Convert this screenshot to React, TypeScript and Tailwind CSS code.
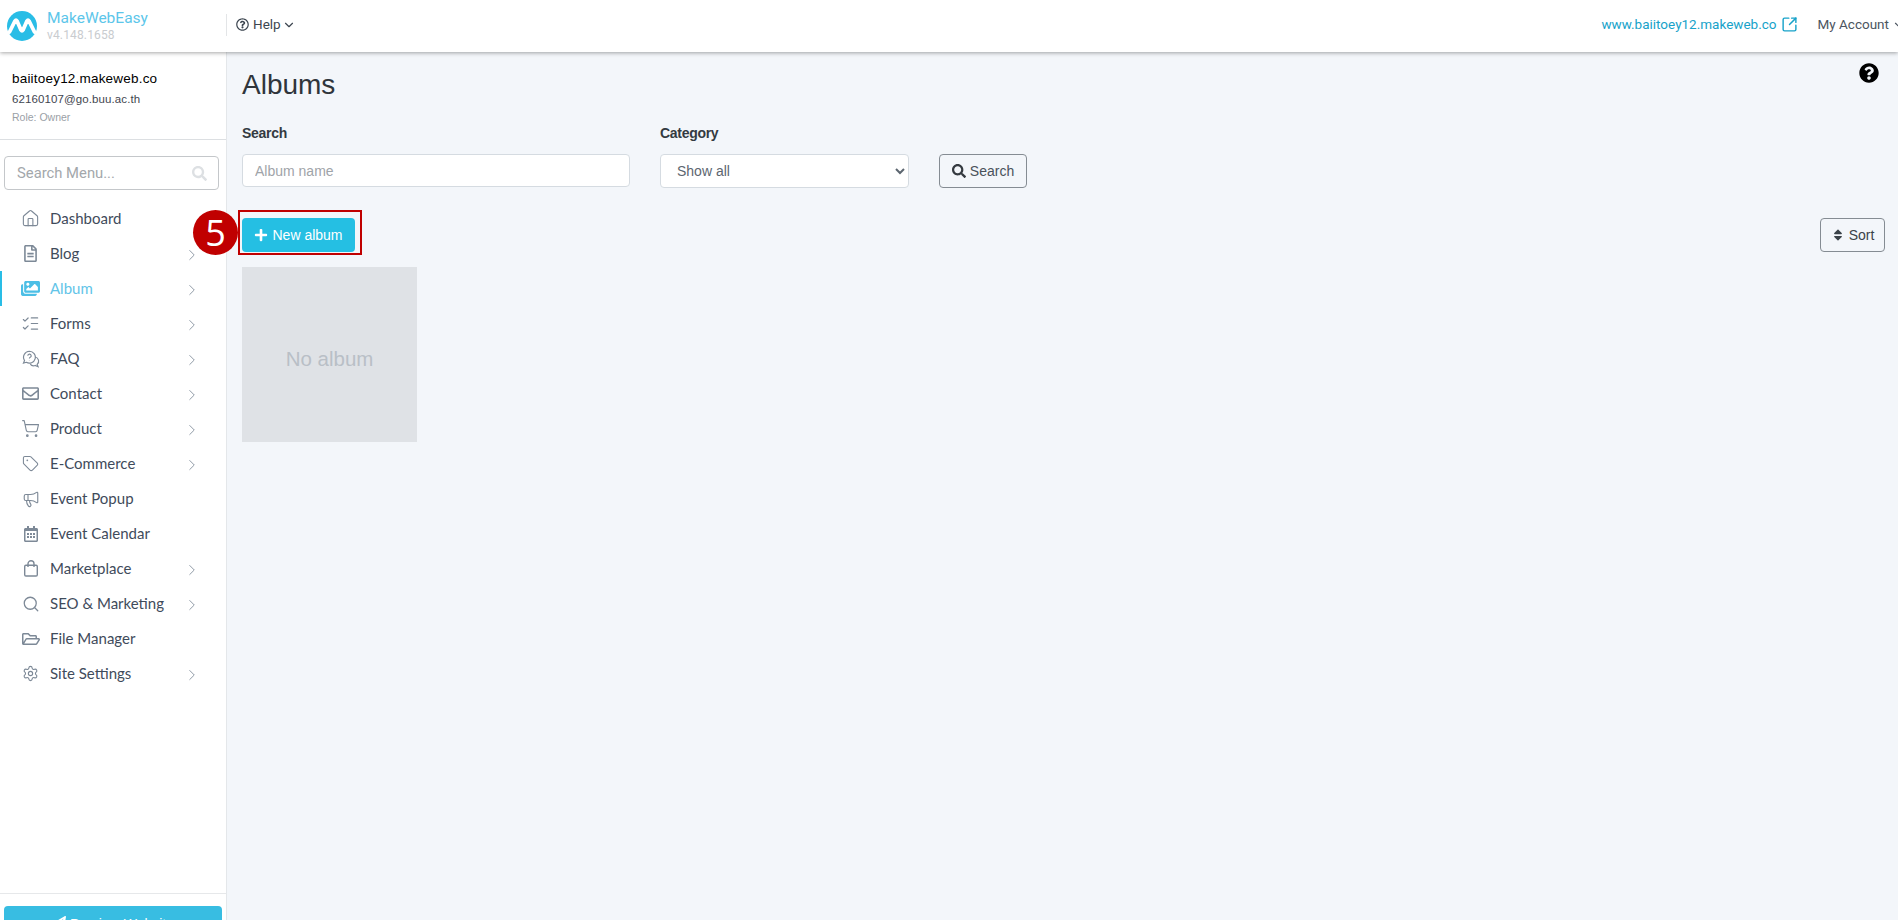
import {
  ChevronDown,
  ChevronRight,
  House,
  ListChecks,
  Megaphone,
  Search,
  Settings,
  ShoppingCart,
  SquareArrowOutUpRight,
  Tag,
} from "lucide-react";
import type { ReactNode } from "react";
import {
  FaImages,
  FaPaperPlane,
  FaPlus,
  FaQuestionCircle,
  FaRegCalendarAlt,
  FaRegEnvelope,
  FaRegFileAlt,
  FaRegFolderOpen,
  FaRegQuestionCircle,
  FaSearch,
  FaSort,
} from "react-icons/fa";

// two overlapping speech bubbles with a question mark
const FaqIcon = () => (
  <svg width="18" height="18" viewBox="0 0 17 17" fill="none" stroke="currentColor" strokeWidth="1.1">
    <path d="M7 1.2a5.6 5.6 0 0 0-4.6 8.7L1.4 12.3l2.7-.7A5.6 5.6 0 1 0 7 1.2z" />
    <path d="M5.5 5.4a1.6 1.6 0 1 1 2.3 1.5c-.6.3-.8.6-.8 1.2M7 9.6v.4" />
    <path d="M12.4 6.6a4 4 0 0 1 1.9 7l.9 2.2-2.8-1.2a4 4 0 0 1-4.6-1.2" />
  </svg>
);

// plain bag with the handle sitting above the body
const BagIcon = () => (
  <svg width="16" height="17" viewBox="0 0 16 17" fill="none" stroke="currentColor" strokeWidth="1.4">
    <rect x="1.7" y="5.2" width="12.6" height="10.8" rx="1.2" />
    <path d="M5 7V3.8a3 3 0 0 1 6 0V7" />
  </svg>
);

const Logo = () => (
  <svg width="30" height="30" viewBox="0 0 30 30">
    <circle cx="15" cy="15" r="15" fill="#29bde6" />
    <path
      d="M2.5 21 L8 10 Q9 8.5 10 10 L14 19 Q15 20.5 16 19 L20 10 Q21 8.5 22 10 L27.5 21"
      fill="none"
      stroke="#fff"
      strokeWidth="3.8"
      strokeLinecap="round"
    />
  </svg>
);

type MenuItem = { label: string; icon: ReactNode; arrow?: boolean; active?: boolean };

const menu: MenuItem[] = [
  { label: "Dashboard", icon: <House size={19} strokeWidth={1.4} /> },
  { label: "Blog", icon: <FaRegFileAlt size={17} />, arrow: true },
  { label: "Album", icon: <FaImages size={19} />, arrow: true, active: true },
  { label: "Forms", icon: <ListChecks size={19} strokeWidth={1.5} />, arrow: true },
  { label: "FAQ", icon: <FaqIcon />, arrow: true },
  { label: "Contact", icon: <FaRegEnvelope size={17} />, arrow: true },
  { label: "Product", icon: <ShoppingCart size={19} strokeWidth={1.4} />, arrow: true },
  { label: "E-Commerce", icon: <Tag size={17} strokeWidth={1.5} />, arrow: true },
  { label: "Event Popup", icon: <Megaphone size={18} strokeWidth={1.5} /> },
  { label: "Event Calendar", icon: <FaRegCalendarAlt size={16} /> },
  { label: "Marketplace", icon: <BagIcon />, arrow: true },
  { label: "SEO & Marketing", icon: <Search size={18} strokeWidth={1.7} />, arrow: true },
  { label: "File Manager", icon: <FaRegFolderOpen size={18} /> },
  { label: "Site Settings", icon: <Settings size={17} strokeWidth={1.6} />, arrow: true },
];

const Sidebar = () => (
  <aside className="flex w-[227px] shrink-0 flex-col overflow-hidden border-r border-[#e4e7ea] bg-white">
    <div className="h-[88px] shrink-0 border-b border-[#dcdfe2] pl-3 pt-[17px] font-['Liberation_Sans',sans-serif]">
      <div className="text-[13.5px] leading-[20px] tracking-[0.2px] text-black">baiitoey12.makeweb.co</div>
      <div className="mt-[1px] text-[11.5px] leading-[18px] tracking-[0.1px] text-[#3f4650]">62160107@go.buu.ac.th</div>
      <div className="mt-[1px] text-[10.5px] leading-[17px] text-[#9aa0a6]">Role: Owner</div>
    </div>
    <div className="ml-1 mt-[16px] flex h-[34px] w-[215px] shrink-0 items-center justify-between rounded border border-[#c4c7ca] pl-3 pr-[11px] pt-[1px] font-['Roboto',sans-serif] text-[14.8px] text-[#a3a7ab]">
      <span>Search Menu...</span>
      <FaSearch size={15} className="text-[#dde0e3]" />
    </div>
    <nav className="mt-[11px] flex-1">
      {menu.map((item) => (
        <div
          key={item.label}
          className={`flex h-[35px] items-center border-l-2 font-['Lato',sans-serif] text-[15px] ${
            item.active ? "border-[#29bde6] text-[#62c4e8]" : "border-transparent text-[#3f4b5b]"
          }`}
        >
          <span className={`flex w-[48px] justify-center pl-[16px] pr-[7px] ${item.active ? "text-[#4cbfe6]" : "text-[#7d8997]"}`}>
            {item.icon}
          </span>
          <span className="flex-1">{item.label}</span>
          {item.arrow && <ChevronRight size={18} strokeWidth={1.3} className="mr-[25px] mt-[2px] text-[#8d98a5]" />}
        </div>
      ))}
    </nav>
    <div className="h-[27px] shrink-0 border-t border-[#e6e8ea] px-1 pt-3">
      <div className="flex h-[34px] items-start justify-center gap-1 rounded bg-[#38bde2] pt-[10px] font-['Liberation_Sans',sans-serif] text-[14px] leading-[16px] text-white">
        <FaPaperPlane size={14} />
        <span>Preview Website</span>
      </div>
    </div>
  </aside>
);

const Header = () => (
  <header className="relative z-10 flex h-[52px] shrink-0 items-center bg-white pb-[3px] shadow-[0_1px_4px_rgba(0,0,0,0.35)]">
    <div className="flex w-[226px] shrink-0 items-center pl-[7px] pt-[3px]">
      <Logo />
      <div className="ml-[10px] font-['Roboto',sans-serif]">
        <div className="text-[15.5px] leading-[17px] text-[#5cc6ea]">MakeWebEasy</div>
        <div className="mt-[1px] text-[12px] leading-[14px] tracking-[0.15px] text-[#c9cccf]">v4.148.1658</div>
      </div>
    </div>
    <div className="flex h-[22px] items-center border-l border-[#e3e5e7] pl-[9px] font-['Roboto',sans-serif] text-[13.5px] text-[#3d4650]">
      <FaRegQuestionCircle size={13} className="mr-[4px]" />
      Help
      <ChevronDown size={14} strokeWidth={2} className="ml-[1px]" />
    </div>
    <div className="ml-auto -mr-[8px] flex items-center font-['Roboto',sans-serif] text-[13.5px]">
      <span className="text-[#17a2c9]">www.baiitoey12.makeweb.co</span>
      <SquareArrowOutUpRight size={17} strokeWidth={2} className="ml-[4px] text-[#17a2c9]" />
      <span className="ml-[20px] text-[#4c5560]">My Account</span>
      <ChevronDown size={14} strokeWidth={2} className="ml-[3px] text-[#4c5560]" />
    </div>
  </header>
);

const Main = () => (
  <main className="relative flex-1 bg-[#f3f6fa] pl-[15px] pr-[13px] font-['Liberation_Sans',sans-serif]">
    <FaQuestionCircle size={20} className="absolute right-[19px] top-[11px] text-black" />
    <h1 className="mt-[15px] text-[28px] leading-[36px] text-[#2f353b]">Albums</h1>

    <div className="mt-[20px] flex items-end gap-[30px]">
      <div className="w-[388px]">
        <label className="block text-[14px] font-bold leading-[20px] tracking-[-0.3px] text-[#333a41]">Search</label>
        <input
          placeholder="Album name"
          className="mb-[1px] mt-[11px] h-[33px] w-full rounded border border-[#d5dbe1] bg-white px-[12px] text-[14px] outline-none placeholder:text-[#9fa4a9]"
        />
      </div>
      <div className="w-[249px]">
        <label className="block text-[14px] font-bold leading-[20px] tracking-[-0.3px] text-[#333a41]">Category</label>
        <select className="mt-[11px] h-[34px] w-full rounded border border-[#d5dbe1] bg-white pl-[12px] pr-[4px] text-[14px] text-[#5c6670] outline-none">
          <option>Show all</option>
        </select>
      </div>
      <button className="flex h-[34px] w-[88px] items-center justify-center gap-[4px] rounded border border-[#858c93] text-[14px] text-[#4a525a]">
        <FaSearch size={14} className="text-[#343a40]" />
        Search
      </button>
    </div>

    <div className="mt-[30px] flex items-center justify-between">
      <div className="relative">
        <button className="flex h-[34px] w-[113px] items-center justify-center gap-[4px] rounded bg-[#25bfe3] text-[14px] text-white">
          <FaPlus size={14} />
          New album
        </button>
        {/* tutorial annotation over the button */}
        <div className="absolute -left-[4px] -top-[8px] h-[45px] w-[124px] border-2 border-[#c00000]" />
        <div className="absolute -left-[49px] -top-[8px] flex h-[45px] w-[45px] items-center justify-center rounded-full bg-[#c00000] font-['Open_Sans',sans-serif] text-[36px] leading-none text-white">
          5
        </div>
      </div>
      <button className="flex h-[34px] w-[65px] items-center justify-center gap-[4px] rounded border border-[#858c93] text-[14px] text-[#3a4249]">
        <FaSort size={14} />
        Sort
      </button>
    </div>

    <div className="mt-[15px] flex h-[175px] w-[175px] items-center justify-center bg-[#dfe2e6] pt-[10px] text-[20.5px] text-[#b9bfc6]">
      No album
    </div>
  </main>
);

export default function App() {
  return (
    <div className="flex h-screen w-full flex-col overflow-hidden">
      <Header />
      <div className="flex min-h-0 flex-1">
        <Sidebar />
        <Main />
      </div>
    </div>
  );
}
